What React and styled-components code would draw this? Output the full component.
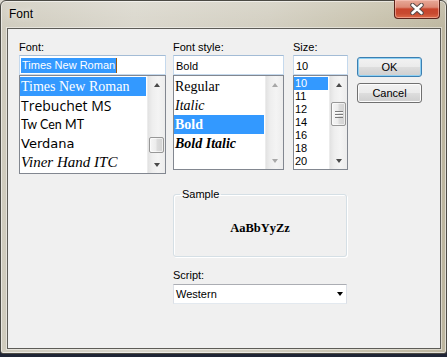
import React from "react";
import styled, { createGlobalStyle } from "styled-components";

const GlobalStyle = createGlobalStyle`
  html, body {
    margin: 0;
    padding: 0;
  }
  body {
    width: 447px;
    height: 357px;
    overflow: hidden;
    background: linear-gradient(#dcd9d0 0, #dcd9d0 50%, #1f2535 50%, #1f2535 100%);
    font-family: "Liberation Sans", Arial, sans-serif;
  }
`;

const Window = styled.div`
  width: 447px;
  height: 354px;
  box-sizing: border-box;
  border: 1px solid #4b4a44;
  border-radius: 6px 6px 3px 3px;
  background:
    linear-gradient(rgba(255, 255, 255, 0.18), rgba(255, 255, 255, 0) 30px),
    linear-gradient(to right, #cfcbbd 0, #d9d6cb 30%, #d2cec0 60%, #c6c0aa 85%, #bdb69f 100%);
  box-shadow: inset 0 0 0 1px rgba(255, 255, 255, 0.55);
  display: flex;
  flex-direction: column;
`;

const TitleBar = styled.div`
  height: 27px;
  display: flex;
  align-items: flex-start;
  padding-left: 8px;
`;

const Title = styled.span`
  font-family: "Liberation Sans", Arial, sans-serif;
  font-size: 12px;
  line-height: 27px;
  color: #000;
  text-shadow: 0 0 6px rgba(255, 255, 255, 0.9);
`;

const CloseButton = styled.div`
  margin-left: auto;
  margin-right: 6px;
  margin-top: -1px;
  width: 46px;
  height: 19px;
  box-sizing: border-box;
  border: 1px solid #5b2219;
  border-top: none;
  border-radius: 0 0 4px 4px;
  background: linear-gradient(#e7a999 0, #dd8a76 40%, #c8442c 50%, #c84a30 75%, #dc6a48 100%);
  box-shadow: inset 0 0 0 1px rgba(255, 210, 200, 0.5);
  display: flex;
  align-items: center;
  justify-content: center;
`;

const Client = styled.div`
  flex: 1;
  margin: 0 5px 4px 6px;
  background: #f0f0f0;
  border: 1px solid #5d5c57;
  box-shadow: 0 0 0 1px rgba(255, 255, 255, 0.45);
  padding: 11px 0 0 11px;
  display: flex;
  flex-direction: column;
`;

const TopRow = styled.div`
  display: flex;
  align-items: flex-start;
`;

const Column = styled.div`
  width: ${(p) => p.$w}px;
  margin-left: ${(p) => p.$ml || 0}px;
  padding-top: ${(p) => p.$pt || 0}px;
  display: flex;
  flex-direction: column;
`;

const Label = styled.div`
  font-size: 11px;
  line-height: 14px;
  height: 15px;
  color: #000;
  white-space: nowrap;
`;

const TextBox = styled.div`
  height: 20px;
  box-sizing: border-box;
  background: #fff;
  border: 1px solid #c5d9ed;
  border-top-color: #a3bcd6;
  padding: 1px 0 0 ${(p) => p.$pl || 2}px;
  font-size: 11px;
  line-height: 16px;
  color: #000;
  display: flex;
  align-items: center;
  white-space: nowrap;
`;

const Selected = styled.span`
  background: #3399ff;
  color: #fff;
  padding: 0 1px;
  line-height: 15px;
`;

const Caret = styled.span`
  width: 1px;
  height: 15px;
  background: #9a5a10;
`;

const ListFrame = styled.div`
  height: ${(p) => p.$h}px;
  box-sizing: border-box;
  border: 1px solid #828790;
  background: #fff;
  display: flex;
`;

const ListItems = styled.div`
  flex: 1;
  padding: 1px 1px 1px ${(p) => p.$pl}px;
  overflow: hidden;
`;

const ListItem = styled.div`
  height: ${(p) => p.$rh}px;
  line-height: ${(p) => p.$rh}px;
  padding-left: 1px;
  font-family: ${(p) => p.$family || `"Liberation Sans", Arial, sans-serif`};
  font-size: ${(p) => p.$size || 11}px;
  font-weight: ${(p) => p.$weight || 400};
  font-style: ${(p) => (p.$italic ? "italic" : "normal")};
  background: ${(p) => (p.$selected ? "#3399ff" : "transparent")};
  color: ${(p) => (p.$selected ? "#fff" : "#000")};
  white-space: nowrap;
  overflow: hidden;
`;

const ScrollBar = styled.div`
  width: 17px;
  display: flex;
  flex-direction: column;
  background: linear-gradient(to right, #e2e2e2 0, #eeeeee 25%, #f4f4f4 60%, #ececec 100%);
  border-left: 1px solid #ececec;
`;

const ArrowButton = styled.div`
  height: 17px;
  display: flex;
  align-items: center;
  justify-content: center;
  &::before {
    content: "";
    width: 0;
    height: 0;
    border-left: 3.5px solid transparent;
    border-right: 3.5px solid transparent;
    ${(p) => (p.$dir === "up" ? "border-bottom" : "border-top")}: 4px solid
      ${(p) => (p.$disabled ? "#a8a8a8" : "#4a4a4a")};
  }
`;

const Track = styled.div`
  flex: 1;
  display: flex;
  flex-direction: column;
  align-items: center;
`;

const Thumb = styled.div`
  margin-top: ${(p) => p.$top}px;
  width: 15px;
  height: ${(p) => p.$h}px;
  box-sizing: border-box;
  border: 1px solid #979797;
  border-radius: 2px;
  background: linear-gradient(to right, #f6f6f6 0, #ececec 45%, #dcdcdc 55%, #d2d2d2 100%);
  box-shadow: inset 0 0 0 1px rgba(255, 255, 255, 0.6);
  display: flex;
  align-items: center;
  justify-content: center;
`;

const Grip = styled.div`
  width: 8px;
  height: 7px;
  background: repeating-linear-gradient(#7a7a7a 0, #7a7a7a 1px, #fafafa 1px, #fafafa 2px, transparent 2px, transparent 3px);
`;

const Button = styled.div`
  height: 20px;
  box-sizing: border-box;
  margin-bottom: 6px;
  border: 1px solid ${(p) => (p.$default ? "#3c7fb1" : "#707070")};
  border-radius: 3px;
  background: linear-gradient(#f2f2f2 0, #ebebeb 48%, #dddddd 52%, #cfcfcf 100%);
  box-shadow: inset 0 0 0 1px ${(p) => (p.$default ? "#8ed0f3" : "#fcfcfc")};
  font-size: 11px;
  line-height: 18px;
  text-align: center;
  color: #000;
`;

const Bottom = styled.div`
  margin-left: 154px;
  margin-top: 14px;
  width: 174px;
  display: flex;
  flex-direction: column;
`;

const GroupBox = styled.fieldset`
  margin: 0;
  padding: 0;
  border: 1px solid #d5dfe5;
  border-radius: 3px;
  box-shadow: inset 1px 1px 0 #ffffff, 1px 1px 0 #ffffff;
`;

const Legend = styled.legend`
  margin-left: 6px;
  padding: 0 2px;
  font-size: 11px;
  line-height: 13px;
  color: #000;
`;

const SampleArea = styled.div`
  height: 55px;
  display: flex;
  align-items: center;
  justify-content: center;
  font-family: "Liberation Serif", "Times New Roman", serif;
  font-weight: 700;
  font-size: 12.5px;
  color: #000;
`;

const ScriptLabel = styled(Label)`
  margin-top: 11px;
  margin-bottom: 1px;
`;

const Combo = styled.div`
  height: 20px;
  box-sizing: border-box;
  background: #fff;
  border: 1px solid #abadb3;
  border-color: #abadb3 #dbdfe6 #e3e9ef #dbdfe6;
  padding-left: 2px;
  display: flex;
  align-items: center;
  font-size: 11px;
  color: #000;
`;

const ComboArrow = styled.span`
  margin-left: auto;
  margin-right: 3px;
  width: 0;
  height: 0;
  border-left: 3.5px solid transparent;
  border-right: 3.5px solid transparent;
  border-top: 4px solid #000;
`;

const ListBox = ({ height, rowHeight, items, selected, padLeft = 0, thumb, disabled }) => (
  <ListFrame $h={height}>
    <ListItems $pl={padLeft}>
      {items.map((it, i) => (
        <ListItem
          key={i}
          $rh={rowHeight}
          $selected={i === selected}
          $family={it.family}
          $size={it.size}
          $weight={it.weight}
          $italic={it.italic}
        >
          {it.label}
        </ListItem>
      ))}
    </ListItems>
    <ScrollBar>
      <ArrowButton $dir="up" $disabled={disabled} />
      <Track>
        {thumb && (
          <Thumb $top={thumb.top} $h={thumb.h}>
            {thumb.grip && <Grip />}
          </Thumb>
        )}
      </Track>
      <ArrowButton $dir="down" $disabled={disabled} />
    </ScrollBar>
  </ListFrame>
);

const serif = `"Liberation Serif", "Times New Roman", serif`;

const fontItems = [
  { label: "Times New Roman", family: serif, size: 14 },
  { label: "Trebuchet MS", family: `"Open Sans", sans-serif`, size: 14 },
  { label: "Tw Cen MT", family: `Lato, sans-serif`, size: 12.5 },
  { label: "Verdana", family: `"DejaVu Sans", Verdana, sans-serif`, size: 13 },
  { label: "Viner Hand ITC", family: serif, size: 15, italic: true },
];

const styleItems = [
  { label: "Regular", family: serif, size: 14 },
  { label: "Italic", family: serif, size: 14, italic: true },
  { label: "Bold", family: serif, size: 14, weight: 700 },
  { label: "Bold Italic", family: serif, size: 14, weight: 700, italic: true },
];

const sizeItems = ["10", "11", "12", "14", "16", "18", "20"].map((s) => ({ label: s }));

export default function App() {
  return (
    <>
      <GlobalStyle />
      <Window>
        <TitleBar>
          <Title>Font</Title>
          <CloseButton>
            <svg width="14" height="12" viewBox="0 0 14 12">
              <path d="M2.5 2 L11.5 10 M11.5 2 L2.5 10" stroke="#5a4a48" strokeWidth="4.6" strokeLinecap="round" />
              <path d="M2.5 2 L11.5 10 M11.5 2 L2.5 10" stroke="#ffffff" strokeWidth="2.6" strokeLinecap="round" />
            </svg>
          </CloseButton>
        </TitleBar>
        <Client>
          <TopRow>
            <Column $w={147}>
              <Label>Font:</Label>
              <TextBox $pl={1}>
                <Selected>Times New Roman</Selected>
                <Caret />
              </TextBox>
              <ListBox
                height={99}
                rowHeight={19}
                items={fontItems}
                selected={0}
                thumb={{ top: 44, h: 16 }}
              />
            </Column>
            <Column $w={111} $ml={7}>
              <Label>Font style:</Label>
              <TextBox>Bold</TextBox>
              <ListBox height={95} rowHeight={19} items={styleItems} selected={2} disabled />
            </Column>
            <Column $w={55} $ml={9}>
              <Label>Size:</Label>
              <TextBox>10</TextBox>
              <ListBox
                height={95}
                rowHeight={13}
                items={sizeItems}
                selected={0}
                thumb={{ top: 9, h: 24, grip: true }}
              />
            </Column>
            <Column $w={65} $ml={9} $pt={17}>
              <Button $default>OK</Button>
              <Button>Cancel</Button>
            </Column>
          </TopRow>
          <Bottom>
            <GroupBox>
              <Legend>Sample</Legend>
              <SampleArea>AaBbYyZz</SampleArea>
            </GroupBox>
            <ScriptLabel>Script:</ScriptLabel>
            <Combo>
              Western
              <ComboArrow />
            </Combo>
          </Bottom>
        </Client>
      </Window>
    </>
  );
}
